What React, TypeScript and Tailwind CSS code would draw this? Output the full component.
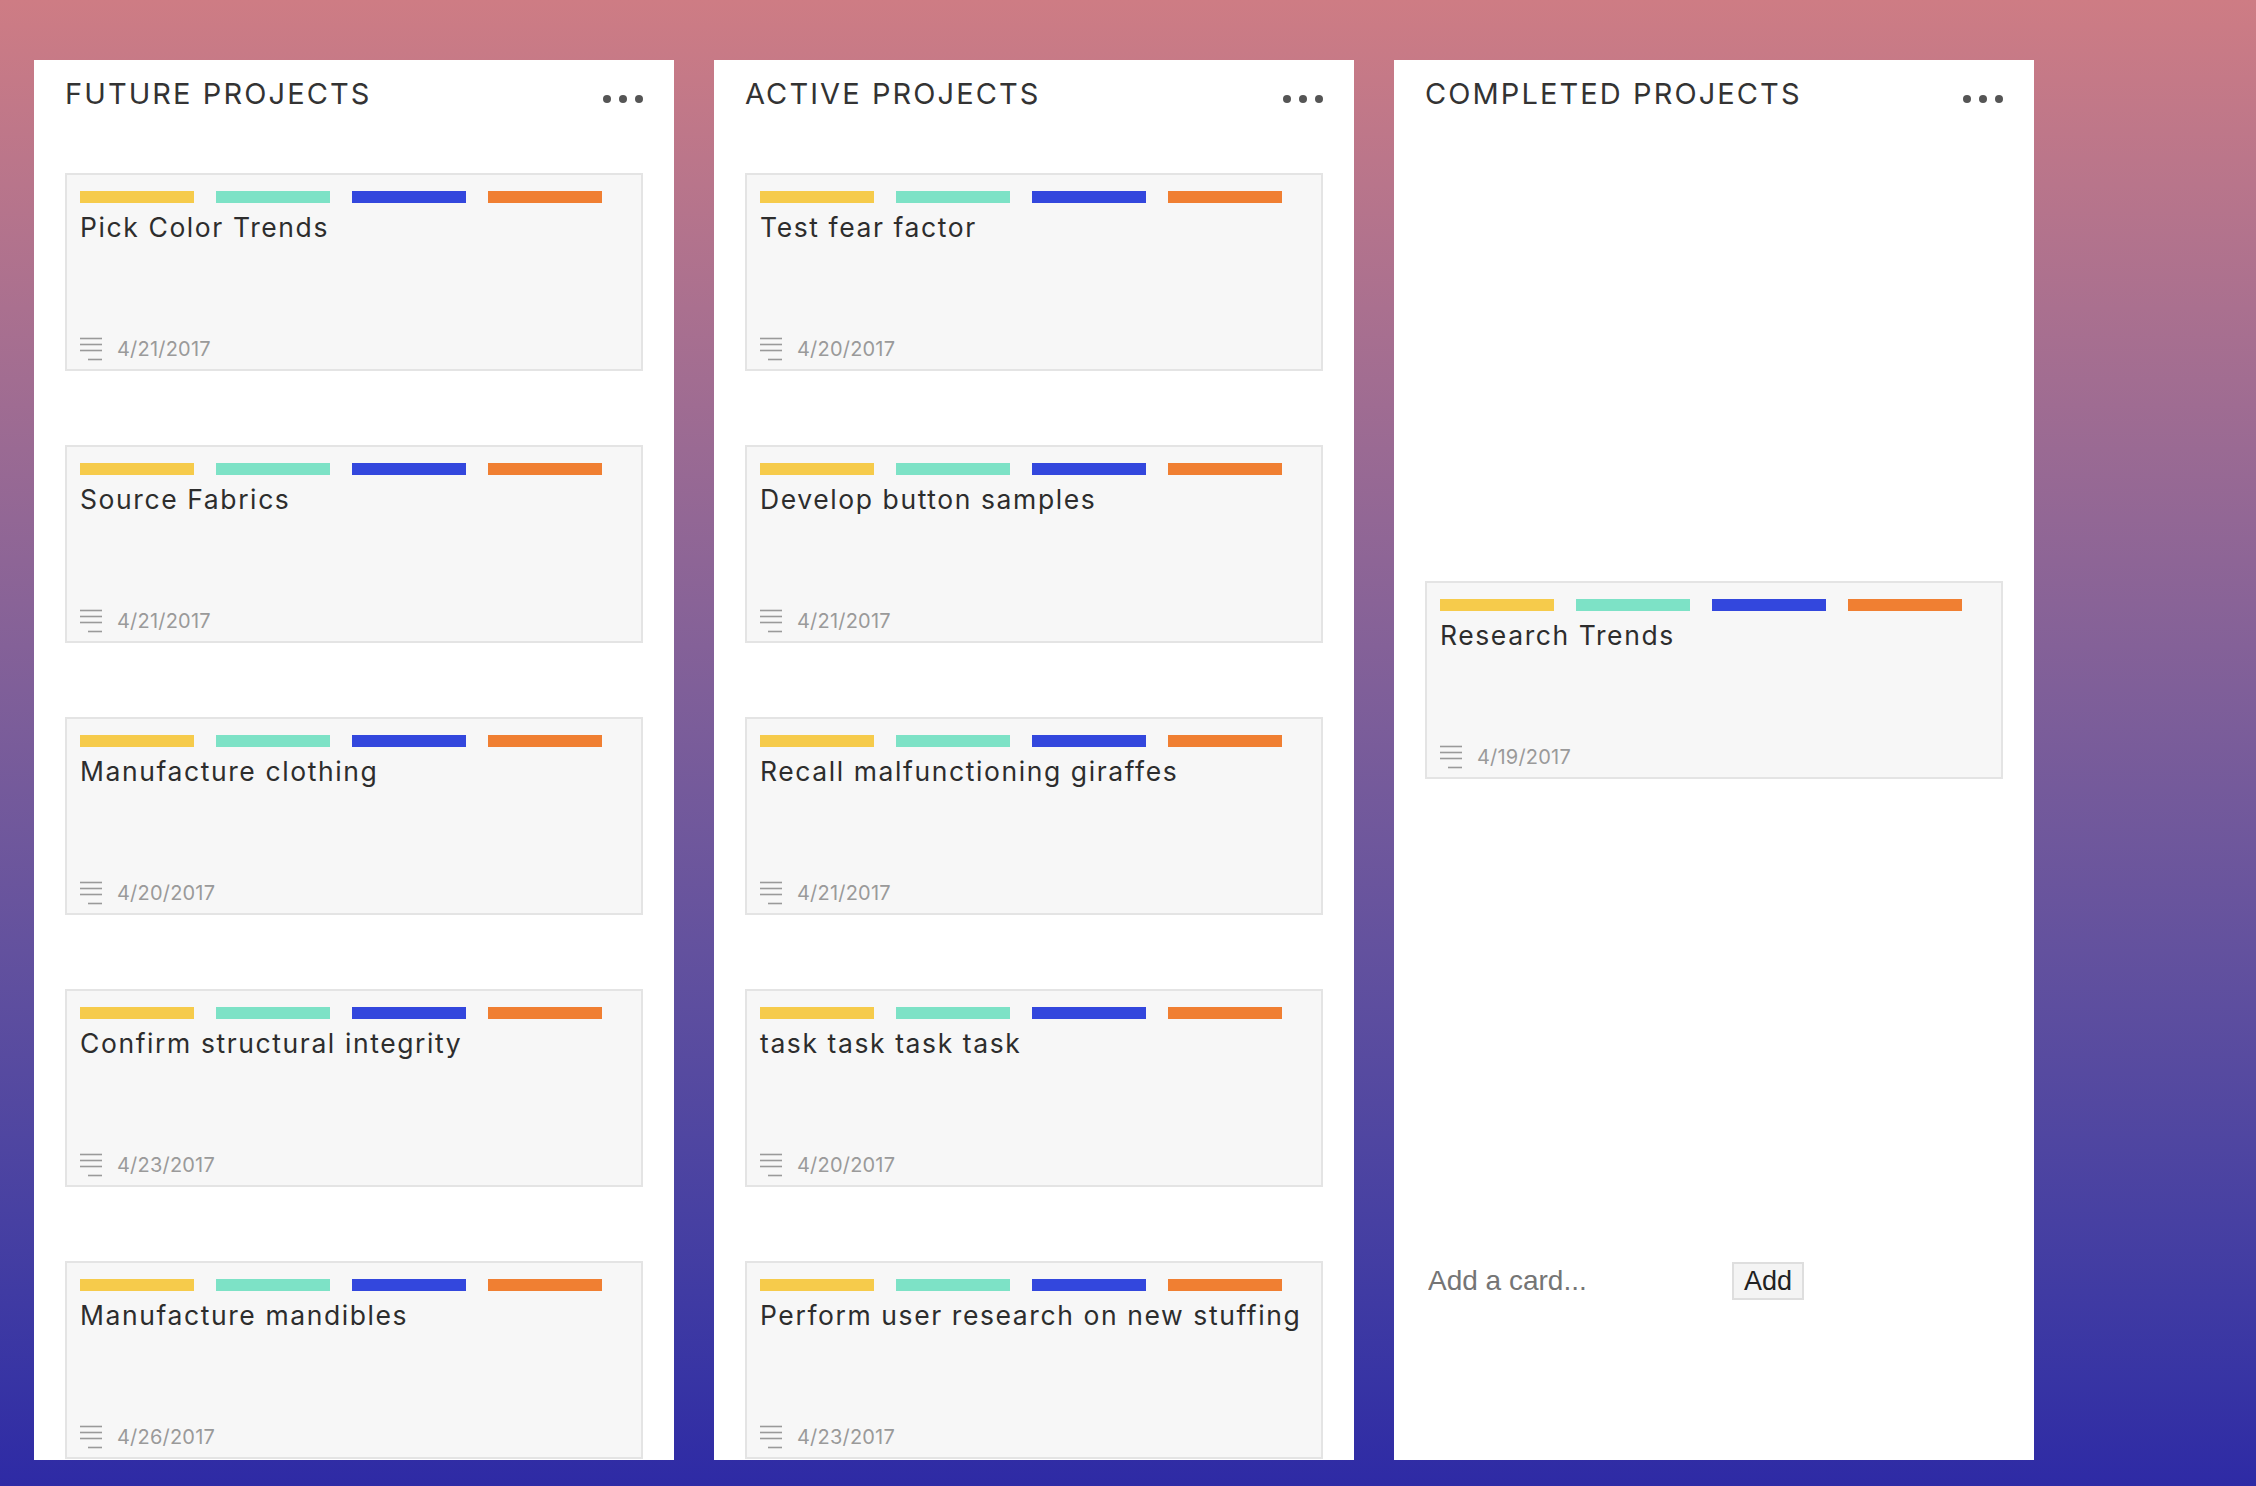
import React from 'react';

type Card = { title: string; date: string };

const bars = ['bg-[#f6cb4b]', 'bg-[#7de2c6]', 'bg-[#3347dd]', 'bg-[#f07f32]'];

const columns: { name: string; cards: Card[] }[] = [
  {
    name: 'Future Projects',
    cards: [
      { title: 'Pick Color Trends', date: '4/21/2017' },
      { title: 'Source Fabrics', date: '4/21/2017' },
      { title: 'Manufacture clothing', date: '4/20/2017' },
      { title: 'Confirm structural integrity', date: '4/23/2017' },
      { title: 'Manufacture mandibles', date: '4/26/2017' },
    ],
  },
  {
    name: 'Active Projects',
    cards: [
      { title: 'Test fear factor', date: '4/20/2017' },
      { title: 'Develop button samples', date: '4/21/2017' },
      { title: 'Recall malfunctioning giraffes', date: '4/21/2017' },
      { title: 'task task task task', date: '4/20/2017' },
      { title: 'Perform user research on new stuffing', date: '4/23/2017' },
    ],
  },
];

function NotesIcon() {
  return (
    <svg width="22" height="24" viewBox="0 0 22 24" className="shrink-0">
      <g stroke="#9a9a9a" strokeWidth="1.6">
        <line x1="0" y1="1.5" x2="22" y2="1.5" />
        <line x1="0" y1="7.5" x2="22" y2="7.5" />
        <line x1="0" y1="13.5" x2="22" y2="13.5" />
        <line x1="8" y1="22.5" x2="22" y2="22.5" />
      </g>
    </svg>
  );
}

function TaskCard({ title, date }: Card) {
  return (
    <div className="flex h-[198px] flex-col border-2 border-[#e4e4e4] bg-[#f7f7f7] px-[13px] pt-[16px] pb-[8px]">
      <div className="flex gap-[22px]">
        {bars.map((c) => (
          <span key={c} className={`h-[12px] w-[114px] ${c}`} />
        ))}
      </div>
      <p className="mt-[9px] whitespace-nowrap text-[26.5px] leading-[31px] tracking-[0.06em] text-[#2d2d2d]">
        {title}
      </p>
      <div className="mt-auto flex items-center gap-[15px]">
        <NotesIcon />
        <span className="text-[20px] leading-[23px] tracking-[0.01em] text-[#9a9a9a]">{date}</span>
      </div>
    </div>
  );
}

function PanelHeader({ name }: { name: string }) {
  return (
    <div className="flex items-start justify-between">
      <h2 className="text-[29px] leading-[35px] font-normal uppercase tracking-[0.072em] text-[#333]">{name}</h2>
      <div className="mt-[19px] flex gap-[8px]">
        <span className="h-[8px] w-[8px] rounded-full bg-[#555]" />
        <span className="h-[8px] w-[8px] rounded-full bg-[#555]" />
        <span className="h-[8px] w-[8px] rounded-full bg-[#555]" />
      </div>
    </div>
  );
}

export default function App() {
  return (
    <div className="flex h-[1486px] w-full gap-[40px] overflow-hidden bg-linear-to-b from-[#ce7c84] to-[#2e2aa5] pl-[34px] pt-[60px] font-['Inter',sans-serif]">
      {columns.map((col) => (
        <section key={col.name} className="h-[1400px] w-[640px] shrink-0 overflow-hidden bg-white px-[31px] pt-[16px]">
          <PanelHeader name={col.name} />
          <div className="mt-[62px] flex flex-col gap-[74px]">
            {col.cards.map((card) => (
              <TaskCard key={card.title} {...card} />
            ))}
          </div>
        </section>
      ))}

      {/* completed column with the add form */}
      <section className="h-[1400px] w-[640px] shrink-0 overflow-hidden bg-white px-[31px] pt-[16px]">
        <PanelHeader name="Completed Projects" />
        <div className="mt-[470px]">
          <TaskCard title="Research Trends" date="4/19/2017" />
        </div>
        <form className="mt-[483px] flex items-center font-['Liberation_Sans',Arial,sans-serif]" onSubmit={(e) => e.preventDefault()}>
          <input
            type="text"
            placeholder="Add a card..."
            className="h-[37px] w-[300px] bg-transparent pl-[3px] text-[28px] text-[#333] outline-none placeholder:text-[#757575]"
          />
          <button
            type="submit"
            className="ml-[7px] h-[38px] border-2 border-[#dedede] bg-[#f4f4f4] px-[10px] text-[27px] leading-[30px] text-[#222]"
          >
            Add
          </button>
        </form>
      </section>
    </div>
  );
}
